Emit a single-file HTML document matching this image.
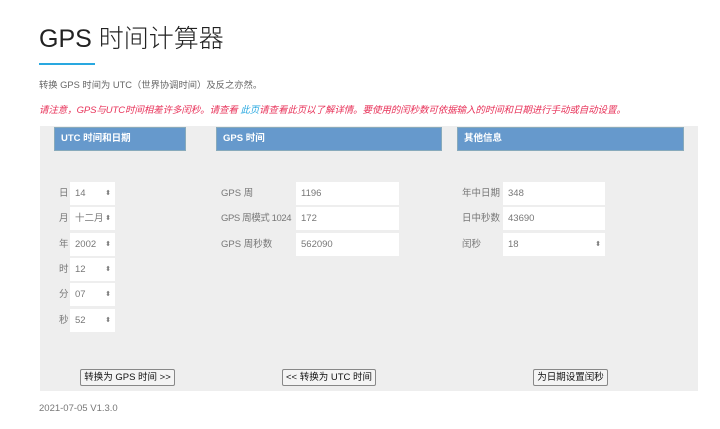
<!DOCTYPE html><html><head><meta charset="utf-8"><style>
body{margin:0;width:720px;height:429px;background:#fff;font-family:"Liberation Sans","Noto Sans CJK SC",sans-serif;position:relative;overflow:hidden}
.a{position:absolute;white-space:nowrap}
h1{position:absolute;left:39px;top:22px;margin:0;font-weight:300;font-size:25px;color:#222;font-family:"Liberation Sans","Noto Sans CJK SC",sans-serif;line-height:34px}
.gray{position:absolute;left:40px;top:126px;width:658px;height:265px;background:#eee}
.hd{position:absolute;top:127px;height:24px;background:#6699cc;color:#fff;font-size:9.5px;font-weight:bold;line-height:22px;padding-left:6px;box-sizing:border-box;border:1px solid #8ab}
.lb{position:absolute;font-size:9.5px;color:#777;line-height:23px;white-space:nowrap}
.in{position:absolute;background:#fff;height:23px;font-size:9.5px;color:#777;line-height:23px;padding-left:5px;box-sizing:border-box}
.ar{position:absolute;right:4px;top:0;font-size:7px;color:#777}
.bt{position:absolute;top:369px;height:17px;border:1px solid #888;background:#f4f4f4;font-size:9.5px;color:#111;line-height:15px;text-align:center;box-sizing:border-box;border-radius:2px;white-space:nowrap}
</style></head><body>
<h1>GPS 时间计算器</h1>
<div class="a" style="left:39px;top:63px;width:56px;height:2px;background:#29a8e0"></div>
<div class="a" style="left:39px;top:77px;font-size:9.3px;color:#666">转换 GPS 时间为 UTC（世界协调时间）及反之亦然。</div>
<div class="a" style="left:39px;top:102px;font-size:9.5px;letter-spacing:-0.1px;color:#e8335a;font-style:italic">请注意，GPS与UTC时间相差许多闰秒。请查看 <span style="color:#29a8e0">此页</span>请查看此页以了解详情。要使用的闰秒数可依据输入的时间和日期进行手动或自动设置。</div>
<div class="gray"></div>
<div class="hd" style="left:54px;width:132px">UTC 时间和日期</div>
<div class="hd" style="left:216px;width:226px">GPS 时间</div>
<div class="hd" style="left:457px;width:227px">其他信息</div>

<div class="lb" style="left:59px;top:182px">日</div><div class="in" style="left:70px;top:182px;width:45px">14<span class="ar">⬍</span></div>
<div class="lb" style="left:59px;top:207px">月</div><div class="in" style="left:70px;top:207px;width:45px">十二月<span class="ar">⬍</span></div>
<div class="lb" style="left:59px;top:233px">年</div><div class="in" style="left:70px;top:233px;width:45px">2002<span class="ar">⬍</span></div>
<div class="lb" style="left:59px;top:258px">时</div><div class="in" style="left:70px;top:258px;width:45px">12<span class="ar">⬍</span></div>
<div class="lb" style="left:59px;top:283px">分</div><div class="in" style="left:70px;top:283px;width:45px">07<span class="ar">⬍</span></div>
<div class="lb" style="left:59px;top:309px">秒</div><div class="in" style="left:70px;top:309px;width:45px">52<span class="ar">⬍</span></div>

<div class="lb" style="left:221px;top:182px">GPS 周</div><div class="in" style="left:296px;top:182px;width:103px">1196</div>
<div class="lb" style="left:221px;top:207px;letter-spacing:-0.4px">GPS 周模式 1024</div><div class="in" style="left:296px;top:207px;width:103px">172</div>
<div class="lb" style="left:221px;top:233px">GPS 周秒数</div><div class="in" style="left:296px;top:233px;width:103px">562090</div>

<div class="lb" style="left:462px;top:182px">年中日期</div><div class="in" style="left:503px;top:182px;width:102px">348</div>
<div class="lb" style="left:462px;top:207px">日中秒数</div><div class="in" style="left:503px;top:207px;width:102px">43690</div>
<div class="lb" style="left:462px;top:233px">闰秒</div><div class="in" style="left:503px;top:233px;width:102px">18<span class="ar">⬍</span></div>

<div class="bt" style="left:80px;width:95px">转换为 GPS 时间 &gt;&gt;</div>
<div class="bt" style="left:282px;width:94px">&lt;&lt; 转换为 UTC 时间</div>
<div class="bt" style="left:533px;width:75px">为日期设置闰秒</div>
<div class="a" style="left:39px;top:403px;font-size:9.5px;color:#777">2021-07-05 V1.3.0</div>
</body></html>
